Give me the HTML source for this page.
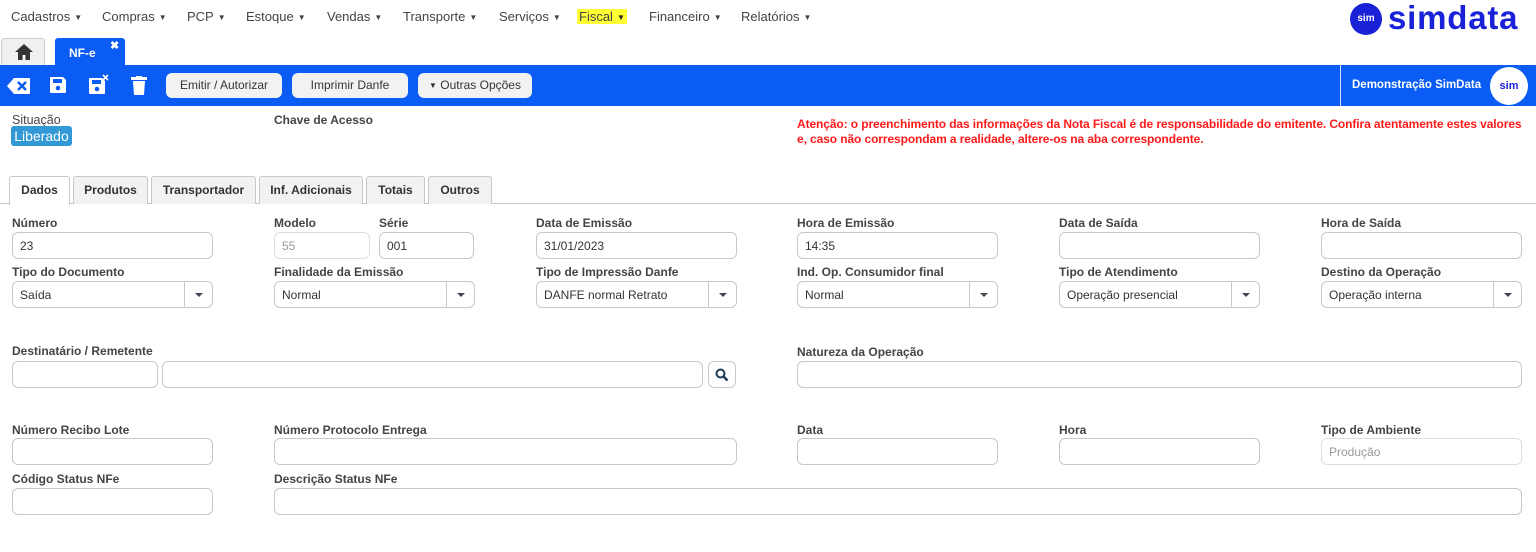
<!DOCTYPE html><html><head><meta charset="utf-8"><style>
*{box-sizing:border-box;margin:0;padding:0}
body{width:1536px;height:552px;background:#fff;font-family:"Liberation Sans",sans-serif;position:relative;overflow:hidden;color:#333}
.a{position:absolute}
.menu{top:9px;font-size:13px;color:#444}
.menu span.c{font-size:8px;margin-left:4px;vertical-align:1px}
.lbl{font-size:12px;font-weight:bold;color:#444;position:absolute}
.in{position:absolute;height:27px;border:1px solid #c8c8c8;border-radius:6px;font-size:12px;padding:6px 7px;color:#333;background:#fff}
.in.d{color:#999;border-color:#ddd}
.sel .ar{position:absolute;right:0;top:0;width:28px;height:25px;border-left:1px solid #c8c8c8;}
.sel .ar:after{content:"";position:absolute;left:10px;top:11px;border-left:4px solid transparent;border-right:4px solid transparent;border-top:4px solid #445}
.btn{position:absolute;top:73px;height:25px;background:#f2f2f2;border-radius:6px;font-size:12px;color:#333;text-align:center;line-height:25px}
.tab{position:absolute;top:176px;height:28px;border:1px solid #c8c8c8;border-bottom:none;background:#f2f2f2;font-size:12px;font-weight:bold;text-align:center;line-height:27px;color:#333;border-radius:3px 3px 0 0}
</style></head><body>
<div class="a menu" style="left:11px">Cadastros<span class="c">▼</span></div>
<div class="a menu" style="left:102px">Compras<span class="c">▼</span></div>
<div class="a menu" style="left:187px">PCP<span class="c">▼</span></div>
<div class="a menu" style="left:246px">Estoque<span class="c">▼</span></div>
<div class="a menu" style="left:327px">Vendas<span class="c">▼</span></div>
<div class="a menu" style="left:403px">Transporte<span class="c">▼</span></div>
<div class="a menu" style="left:499px">Serviços<span class="c">▼</span></div>
<div class="a menu" style="left:579px;background:#ffff33;padding:0 2px;margin-left:-2px">Fiscal<span class="c" style="color:#222">▼</span></div>
<div class="a menu" style="left:649px">Financeiro<span class="c">▼</span></div>
<div class="a menu" style="left:741px">Relatórios<span class="c">▼</span></div>
<div class="a" style="left:1350px;top:3px;width:32px;height:32px;border-radius:50%;background:#1a22d8;color:#fff;font-size:10px;font-weight:bold;text-align:center;line-height:32px">sim</div>
<div class="a" style="left:1388px;top:0px;font-size:33px;font-weight:bold;color:#1a22d8;letter-spacing:0.8px;line-height:36px">simdata</div>
<!-- tabs -->
<div class="a" style="left:1px;top:38px;width:44px;height:27px;background:#f0f0f0;border:1px solid #ccc;border-bottom:none;border-radius:3px 3px 0 0"><svg width="20" height="18" viewBox="0 0 20 18" style="position:absolute;left:12px;top:4px"><path d="M10 1L1 9h3v8h4.5v-5h3v5H16V9h3z" fill="#333"/></svg></div>
<div class="a" style="left:55px;top:38px;width:70px;height:27px;background:#0a5cf5;border-radius:3px 3px 0 0;color:#fff;font-size:12px;font-weight:bold"><span style="position:absolute;left:14px;top:8px">NF-e</span><span style="position:absolute;left:55px;top:1px;font-size:11px">✖</span></div>
<div class="a" style="left:0;top:65px;width:1536px;height:41px;background:#0a5cf5"></div>
<div class="a" style="left:1340px;top:65px;width:1px;height:41px;background:#cfe0ff"></div>
<svg class="a" style="left:7px;top:77px" width="24" height="18" viewBox="0 0 24 18"><path d="M7 1h15a1 1 0 011 1v14a1 1 0 01-1 1H7L0 9z" fill="#fff"/><path d="M11 5l8 8M19 5l-8 8" stroke="#0a5cf5" stroke-width="2.5"/></svg>
<svg class="a" style="left:49px;top:76px" width="18" height="18" viewBox="0 0 18 18"><path d="M1 2a1 1 0 011-1h12l3 3v12a1 1 0 01-1 1H2a1 1 0 01-1-1z" fill="#fff"/><rect x="4" y="3" width="9" height="4" fill="#0a5cf5"/><circle cx="9" cy="12" r="2.3" fill="#0a5cf5"/></svg>
<svg class="a" style="left:88px;top:74px" width="22" height="22" viewBox="0 0 22 22"><path d="M1 5a1 1 0 011-1h12l3 3v12a1 1 0 01-1 1H2a1 1 0 01-1-1z" fill="#fff"/><rect x="4" y="6" width="9" height="4" fill="#0a5cf5"/><circle cx="9" cy="15" r="2.3" fill="#0a5cf5"/><path d="M15 1l5 5M20 1l-5 5" stroke="#fff" stroke-width="1.6"/></svg>
<svg class="a" style="left:131px;top:76px" width="16" height="19" viewBox="0 0 16 19"><rect x="0" y="1" width="16" height="3" fill="#fff"/><rect x="5" y="0" width="6" height="2" fill="#fff"/><path d="M2 5h12l-1 14H3z" fill="#fff"/></svg>
<div class="btn" style="left:166px;width:116px">Emitir / Autorizar</div>
<div class="btn" style="left:292px;width:116px">Imprimir Danfe</div>
<div class="btn" style="left:418px;width:114px"><span style="font-size:8px;vertical-align:1px">▼</span> Outras Opções</div>
<div class="a" style="left:1352px;top:79px;font-size:11.5px;font-weight:bold;color:#fff">Demonstração SimData</div>
<div class="a" style="left:1490px;top:67px;width:38px;height:38px;border-radius:50%;background:#fff;color:#1a22d8;font-size:11px;font-weight:bold;text-align:center;line-height:38px">sim</div>
<!-- status -->
<div class="lbl" style="left:12px;top:113px;font-weight:normal;font-size:12.5px">Situação</div>
<div class="a" style="left:11px;top:126px;width:61px;height:20px;background:#3399d6;border-radius:3px;color:#fff;font-size:14px;text-align:center;line-height:20px">Liberado</div>
<div class="lbl" style="left:274px;top:113px">Chave de Acesso</div>
<div class="a" style="left:797px;top:117px;font-size:12px;font-weight:bold;color:#ff1a1a;line-height:15px;white-space:nowrap;letter-spacing:-0.1px">Atenção: o preenchimento das informações da Nota Fiscal é de responsabilidade do emitente. Confira atentamente estes valores<br>e, caso não correspondam a realidade, altere-os na aba correspondente.</div>
<!-- tabs -->
<div class="a" style="left:0;top:203px;width:1536px;height:1px;background:#c8c8c8"></div>
<div class="tab" style="left:9px;width:61px;background:#fff;height:29px">Dados</div>
<div class="tab" style="left:73px;width:75px">Produtos</div>
<div class="tab" style="left:151px;width:105px">Transportador</div>
<div class="tab" style="left:259px;width:104px">Inf. Adicionais</div>
<div class="tab" style="left:366px;width:59px">Totais</div>
<div class="tab" style="left:428px;width:64px">Outros</div>
<!-- row1 -->
<div class="lbl" style="left:12px;top:216px">Número</div><div class="in" style="left:12px;top:232px;width:201px">23</div>
<div class="lbl" style="left:274px;top:216px">Modelo</div><div class="in d" style="left:274px;top:232px;width:96px">55</div>
<div class="lbl" style="left:379px;top:216px">Série</div><div class="in" style="left:379px;top:232px;width:95px">001</div>
<div class="lbl" style="left:536px;top:216px">Data de Emissão</div><div class="in" style="left:536px;top:232px;width:201px">31/01/2023</div>
<div class="lbl" style="left:797px;top:216px">Hora de Emissão</div><div class="in" style="left:797px;top:232px;width:201px">14:35</div>
<div class="lbl" style="left:1059px;top:216px">Data de Saída</div><div class="in" style="left:1059px;top:232px;width:201px"></div>
<div class="lbl" style="left:1321px;top:216px">Hora de Saída</div><div class="in" style="left:1321px;top:232px;width:201px"></div>
<!-- row2 -->
<div class="lbl" style="left:12px;top:265px">Tipo do Documento</div><div class="in sel" style="left:12px;top:281px;width:201px">Saída<div class="ar"></div></div>
<div class="lbl" style="left:274px;top:265px">Finalidade da Emissão</div><div class="in sel" style="left:274px;top:281px;width:201px">Normal<div class="ar"></div></div>
<div class="lbl" style="left:536px;top:265px">Tipo de Impressão Danfe</div><div class="in sel" style="left:536px;top:281px;width:201px">DANFE normal Retrato<div class="ar"></div></div>
<div class="lbl" style="left:797px;top:265px">Ind. Op. Consumidor final</div><div class="in sel" style="left:797px;top:281px;width:201px">Normal<div class="ar"></div></div>
<div class="lbl" style="left:1059px;top:265px">Tipo de Atendimento</div><div class="in sel" style="left:1059px;top:281px;width:201px">Operação presencial<div class="ar"></div></div>
<div class="lbl" style="left:1321px;top:265px">Destino da Operação</div><div class="in sel" style="left:1321px;top:281px;width:201px">Operação interna<div class="ar"></div></div>
<!-- row3 -->
<div class="lbl" style="left:12px;top:344px">Destinatário / Remetente</div>
<div class="in" style="left:12px;top:361px;width:146px"></div>
<div class="in" style="left:162px;top:361px;width:541px"></div>
<div class="in" style="left:708px;top:361px;width:28px"><svg width="14" height="14" viewBox="0 0 14 14" style="position:absolute;left:6px;top:6px"><circle cx="5.5" cy="5.5" r="4" fill="none" stroke="#1f3b57" stroke-width="2"/><path d="M8.5 8.5L12.5 12.5" stroke="#1f3b57" stroke-width="2.5"/></svg></div>
<div class="lbl" style="left:797px;top:345px">Natureza da Operação</div>
<div class="in" style="left:797px;top:361px;width:725px"></div>
<!-- row4 -->
<div class="lbl" style="left:12px;top:423px">Número Recibo Lote</div><div class="in" style="left:12px;top:438px;width:201px"></div>
<div class="lbl" style="left:274px;top:423px">Número Protocolo Entrega</div><div class="in" style="left:274px;top:438px;width:463px"></div>
<div class="lbl" style="left:797px;top:423px">Data</div><div class="in" style="left:797px;top:438px;width:201px"></div>
<div class="lbl" style="left:1059px;top:423px">Hora</div><div class="in" style="left:1059px;top:438px;width:201px"></div>
<div class="lbl" style="left:1321px;top:423px">Tipo de Ambiente</div><div class="in d" style="left:1321px;top:438px;width:201px">Produção</div>
<!-- row5 -->
<div class="lbl" style="left:12px;top:472px">Código Status NFe</div><div class="in" style="left:12px;top:488px;width:201px"></div>
<div class="lbl" style="left:274px;top:472px">Descrição Status NFe</div><div class="in" style="left:274px;top:488px;width:1248px"></div>
</body></html>
